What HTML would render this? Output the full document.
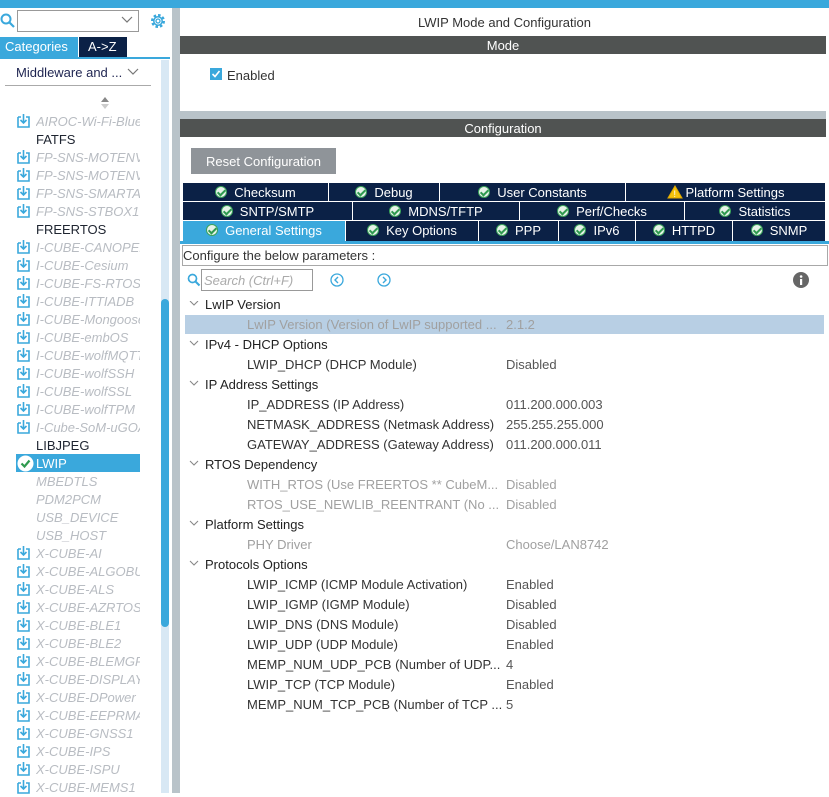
<!DOCTYPE html>
<html><head><meta charset="utf-8"><style>
*{margin:0;padding:0;box-sizing:border-box}
body{width:829px;height:793px;overflow:hidden;background:#fff;font-family:"Liberation Sans",Arial,sans-serif;font-size:13px;color:#333;position:relative}
.a{position:absolute;white-space:nowrap}
.li{position:absolute;left:36px;width:104px;overflow:hidden;white-space:nowrap;font-size:13px;line-height:18px;height:18px}
.g{color:#b8bcc2;font-style:italic}
.n{color:#1e2430}
.tab{position:absolute;background:#0b2146;color:#fff;font-size:13px;text-align:center;border-right:1px solid #fff;white-space:nowrap;overflow:hidden}
.ck{display:inline-block;width:12px;height:12px;border-radius:50%;background:#e6f2e8;border:1px solid #3aa35a;vertical-align:-1px;margin-right:7px;position:relative}
.ck:after{content:"";position:absolute;left:3px;top:1px;width:3px;height:6px;border:solid #2f9a4f;border-width:0 2px 2px 0;transform:rotate(45deg)}
.r{position:absolute;height:20px;line-height:20px;white-space:nowrap}
.grp{left:205px;color:#222}
.ch{left:189px;top:7px;width:10px;height:6px}
.k{left:247px;color:#333}
.v{left:506px;color:#555}
.dim{color:#a0a0a0}
</style></head><body>
<div class="a" style="left:0;top:0;width:829px;height:8px;background:#3aa8dc"></div>
<svg class="a" style="left:0;top:13px" width="16" height="16" viewBox="0 0 16 16"><circle cx="6" cy="6" r="4.5" fill="none" stroke="#3aa8dc" stroke-width="2"/><line x1="9.5" y1="9.5" x2="14" y2="14" stroke="#3aa8dc" stroke-width="2.2"/></svg>
<div class="a" style="left:17px;top:10px;width:122px;height:22px;border:1px solid #999;background:#fff"></div>
<svg class="a" style="left:121px;top:16px" width="12" height="8"><polyline points="1,1 6,6 11,1" fill="none" stroke="#777" stroke-width="1.2"/></svg>
<svg class="a" style="left:149px;top:12px" width="18" height="18" viewBox="0 0 18 18"><circle cx="9" cy="9" r="5.5" fill="none" stroke="#3aa8dc" stroke-width="3" stroke-dasharray="2.4 1.9"/><circle cx="9" cy="9" r="4.2" fill="none" stroke="#3aa8dc" stroke-width="1.5"/><circle cx="9" cy="9" r="2" fill="none" stroke="#3aa8dc" stroke-width="1.3"/></svg>
<div class="a" style="left:0;top:37px;width:78px;height:20px;background:#3aa8dc;color:#fff;line-height:20px;padding-left:5px">Categories</div>
<div class="a" style="left:79px;top:37px;width:48px;height:20px;background:#0b2146;color:#fff;line-height:20px;padding-left:9px">A-&gt;Z</div>
<div class="a" style="left:0;top:57px;width:170px;height:2px;background:#3aa8dc"></div>
<div class="a" style="left:16px;top:65px;color:#1e2450;font-size:13px">Middleware and ...</div>
<svg class="a" style="left:127px;top:68px" width="12" height="8"><polyline points="1,1 6,6 11,1" fill="none" stroke="#777" stroke-width="1.2"/></svg>
<div class="a" style="left:5px;top:85px;width:146px;height:1px;background:#aaa"></div>
<svg class="a" style="left:101px;top:97px" width="8" height="12"><polygon points="4,0 8,5 0,5" fill="#888"/><polygon points="0,7 8,7 4,12" fill="#ccc"/></svg>
<div class="a" style="left:161px;top:60px;width:8px;height:733px;background:#d8e8f4"></div>
<div class="a" style="left:161px;top:299px;width:8px;height:328px;background:#3aa8dc;border-radius:4px"></div>
<div class="a" style="left:172px;top:8px;width:8px;height:785px;background:#b9c3c9"></div>
<div class="a" style="left:16px;top:454px;width:124px;height:18px;background:#3aa8dc"></div>
<svg class="a" style="left:17px;top:455px" width="17" height="17"><circle cx="8.5" cy="8.5" r="8" fill="#fff"/><polyline points="4.5,8.5 7.5,11.5 12.5,5.5" fill="none" stroke="#2f9a4f" stroke-width="2.2"/></svg>
<div class="li" style="top:455px;color:#fff">LWIP</div>

<div class="li g" style="top:113px">AIROC-Wi-Fi-Bluetooth</div>
<div class="li n" style="top:131px">FATFS</div>
<div class="li g" style="top:149px">FP-SNS-MOTENV1</div>
<div class="li g" style="top:167px">FP-SNS-MOTENVWB1</div>
<div class="li g" style="top:185px">FP-SNS-SMARTAG</div>
<div class="li g" style="top:203px">FP-SNS-STBOX1</div>
<div class="li n" style="top:221px">FREERTOS</div>
<div class="li g" style="top:239px">I-CUBE-CANOPEN</div>
<div class="li g" style="top:257px">I-CUBE-Cesium</div>
<div class="li g" style="top:275px">I-CUBE-FS-RTOS</div>
<div class="li g" style="top:293px">I-CUBE-ITTIADB</div>
<div class="li g" style="top:311px">I-CUBE-Mongoose</div>
<div class="li g" style="top:329px">I-CUBE-embOS</div>
<div class="li g" style="top:347px">I-CUBE-wolfMQTT</div>
<div class="li g" style="top:365px">I-CUBE-wolfSSH</div>
<div class="li g" style="top:383px">I-CUBE-wolfSSL</div>
<div class="li g" style="top:401px">I-CUBE-wolfTPM</div>
<div class="li g" style="top:419px">I-Cube-SoM-uGOAL</div>
<div class="li n" style="top:437px">LIBJPEG</div>
<div class="li g" style="top:473px">MBEDTLS</div>
<div class="li g" style="top:491px">PDM2PCM</div>
<div class="li g" style="top:509px">USB_DEVICE</div>
<div class="li g" style="top:527px">USB_HOST</div>
<div class="li g" style="top:545px">X-CUBE-AI</div>
<div class="li g" style="top:563px">X-CUBE-ALGOBUILD</div>
<div class="li g" style="top:581px">X-CUBE-ALS</div>
<div class="li g" style="top:599px">X-CUBE-AZRTOS</div>
<div class="li g" style="top:617px">X-CUBE-BLE1</div>
<div class="li g" style="top:635px">X-CUBE-BLE2</div>
<div class="li g" style="top:653px">X-CUBE-BLEMGR</div>
<div class="li g" style="top:671px">X-CUBE-DISPLAY</div>
<div class="li g" style="top:689px">X-CUBE-DPower</div>
<div class="li g" style="top:707px">X-CUBE-EEPRMA1</div>
<div class="li g" style="top:725px">X-CUBE-GNSS1</div>
<div class="li g" style="top:743px">X-CUBE-IPS</div>
<div class="li g" style="top:761px">X-CUBE-ISPU</div>
<div class="li g" style="top:779px">X-CUBE-MEMS1</div>

<svg class="a" style="left:17px;top:114px" width="14" height="680">
<defs><g id="d"><path d="M1 3 V13 H12 V3 H9 M4 3 H1" fill="none" stroke="#3aa8dc" stroke-width="1.6"/><path d="M6.5 0 V9 M3.5 6 L6.5 9 L9.5 6" fill="none" stroke="#3aa8dc" stroke-width="1.6"/></g></defs>
<use href="#d" y="0"/><use href="#d" y="36"/><use href="#d" y="54"/><use href="#d" y="72"/><use href="#d" y="90"/>
<use href="#d" y="126"/><use href="#d" y="144"/><use href="#d" y="162"/><use href="#d" y="180"/><use href="#d" y="198"/><use href="#d" y="216"/><use href="#d" y="234"/><use href="#d" y="252"/><use href="#d" y="270"/><use href="#d" y="288"/><use href="#d" y="306"/>
<use href="#d" y="432"/><use href="#d" y="450"/><use href="#d" y="468"/><use href="#d" y="486"/><use href="#d" y="504"/><use href="#d" y="522"/><use href="#d" y="540"/><use href="#d" y="558"/><use href="#d" y="576"/><use href="#d" y="594"/><use href="#d" y="612"/><use href="#d" y="630"/><use href="#d" y="648"/><use href="#d" y="666"/>
</svg>

<div class="a" style="left:180px;top:15px;width:649px;text-align:center;color:#333;font-size:13px">LWIP Mode and Configuration</div>
<div class="a" style="left:180px;top:36px;width:646px;height:18px;background:#505352;color:#fff;text-align:center;line-height:19px">Mode</div>
<div class="a" style="left:210px;top:68px;width:12px;height:12px;background:#3aa8dc"></div>
<svg class="a" style="left:210px;top:68px" width="12" height="12"><polyline points="2.5,6 5,8.5 9.5,3" fill="none" stroke="#fff" stroke-width="1.6"/></svg>
<div class="a" style="left:227px;top:68px;color:#333">Enabled</div>
<div class="a" style="left:180px;top:111px;width:646px;height:8px;background:#b9c3c9"></div>
<div class="a" style="left:180px;top:119px;width:646px;height:18px;background:#505352;color:#fff;text-align:center;line-height:19px">Configuration</div>
<div class="a" style="left:191px;top:148px;width:145px;height:26px;background:#8f9499;color:#fff;text-align:center;line-height:27px">Reset Configuration</div>

<div class="tab" style="left:183px;top:183px;width:146px;height:18px;line-height:19px"><span class="ck"></span>Checksum</div>
<div class="tab" style="left:329px;top:183px;width:111px;height:18px;line-height:19px"><span class="ck"></span>Debug</div>
<div class="tab" style="left:440px;top:183px;width:186px;height:18px;line-height:19px"><span class="ck"></span>User Constants</div>
<div class="tab" style="left:626px;top:183px;width:199px;height:18px;line-height:19px;border-right:none"><svg width="16" height="14" style="vertical-align:-2px;margin-right:3px"><polygon points="8,1 15,13 1,13" fill="#f4c20d" stroke="#e0a800"/><text x="6.5" y="12" font-size="9" fill="#fff" font-family="Liberation Sans">!</text></svg>Platform Settings</div>
<div class="tab" style="left:183px;top:202px;width:170px;height:18px;line-height:19px"><span class="ck"></span>SNTP/SMTP</div>
<div class="tab" style="left:353px;top:202px;width:167px;height:18px;line-height:19px"><span class="ck"></span>MDNS/TFTP</div>
<div class="tab" style="left:520px;top:202px;width:165px;height:18px;line-height:19px"><span class="ck"></span>Perf/Checks</div>
<div class="tab" style="left:685px;top:202px;width:140px;height:18px;line-height:19px;border-right:none"><span class="ck"></span>Statistics</div>
<div class="tab" style="left:183px;top:221px;width:163px;height:20px;line-height:20px;background:#3aa8dc"><span class="ck"></span>General Settings</div>
<div class="tab" style="left:346px;top:221px;width:133px;height:20px;line-height:20px"><span class="ck"></span>Key Options</div>
<div class="tab" style="left:479px;top:221px;width:80px;height:20px;line-height:20px"><span class="ck"></span>PPP</div>
<div class="tab" style="left:559px;top:221px;width:77px;height:20px;line-height:20px"><span class="ck"></span>IPv6</div>
<div class="tab" style="left:636px;top:221px;width:97px;height:20px;line-height:20px"><span class="ck"></span>HTTPD</div>
<div class="tab" style="left:733px;top:221px;width:92px;height:20px;line-height:20px;border-right:none"><span class="ck"></span>SNMP</div>
<div class="a" style="left:180px;top:241px;width:649px;height:3px;background:#3aa8dc"></div>
<div class="a" style="left:182px;top:245px;width:646px;height:21px;border:1px solid #a8a8a8;line-height:20px;padding-left:0px;color:#333">Configure the below parameters :</div>
<svg class="a" style="left:187px;top:273px" width="14" height="14"><circle cx="5.5" cy="5.5" r="4" fill="none" stroke="#3aa8dc" stroke-width="1.7"/><line x1="8.5" y1="8.5" x2="12.5" y2="12.5" stroke="#3aa8dc" stroke-width="2"/></svg>
<div class="a" style="left:201px;top:269px;width:112px;height:22px;border:1px solid #999;color:#aaa;font-style:italic;line-height:21px;padding-left:2px">Search (Ctrl+F)</div>
<svg class="a" style="left:330px;top:273px" width="14" height="14"><circle cx="7" cy="7" r="6" fill="none" stroke="#3aa8dc" stroke-width="1.3"/><polyline points="8,4 5,7 8,10" fill="none" stroke="#3aa8dc" stroke-width="1.4"/></svg>
<svg class="a" style="left:377px;top:273px" width="14" height="14"><circle cx="7" cy="7" r="6" fill="none" stroke="#3aa8dc" stroke-width="1.3"/><polyline points="6,4 9,7 6,10" fill="none" stroke="#3aa8dc" stroke-width="1.4"/></svg>
<svg class="a" style="left:793px;top:272px" width="16" height="16"><circle cx="8" cy="8" r="8" fill="#666"/><rect x="7" y="7" width="2.2" height="6" fill="#fff"/><circle cx="8.1" cy="4.5" r="1.3" fill="#fff"/></svg>

<div class="a" style="left:185px;top:315px;width:639px;height:19px;background:#b8cfe4"></div>
<svg class="a" style="left:189px;top:301px" width="10" height="260">
<defs><polyline id="c" points="1,0 5,4 9,0" fill="none" stroke="#888" stroke-width="1.1"/></defs>
<use href="#c" y="0"/><use href="#c" y="40"/><use href="#c" y="80"/><use href="#c" y="160"/><use href="#c" y="220"/><use href="#c" y="260"/>
</svg>
<svg class="a" style="left:189px;top:561px" width="10" height="6"><polyline points="1,0 5,4 9,0" fill="none" stroke="#888" stroke-width="1.1"/></svg>
<div class="r grp" style="top:295px">LwIP Version</div>
<div class="r k dim" style="top:315px">LwIP Version (Version of LwIP supported ...</div><div class="r v dim" style="top:315px">2.1.2</div>
<div class="r grp" style="top:335px">IPv4 - DHCP Options</div>
<div class="r k" style="top:355px">LWIP_DHCP (DHCP Module)</div><div class="r v" style="top:355px">Disabled</div>
<div class="r grp" style="top:375px">IP Address Settings</div>
<div class="r k" style="top:395px">IP_ADDRESS (IP Address)</div><div class="r v" style="top:395px">011.200.000.003</div>
<div class="r k" style="top:415px">NETMASK_ADDRESS (Netmask Address)</div><div class="r v" style="top:415px">255.255.255.000</div>
<div class="r k" style="top:435px">GATEWAY_ADDRESS (Gateway Address)</div><div class="r v" style="top:435px">011.200.000.011</div>
<div class="r grp" style="top:455px">RTOS Dependency</div>
<div class="r k dim" style="top:475px">WITH_RTOS (Use FREERTOS ** CubeM...</div><div class="r v dim" style="top:475px">Disabled</div>
<div class="r k dim" style="top:495px">RTOS_USE_NEWLIB_REENTRANT (No ...</div><div class="r v dim" style="top:495px">Disabled</div>
<div class="r grp" style="top:515px">Platform Settings</div>
<div class="r k dim" style="top:535px">PHY Driver</div><div class="r v dim" style="top:535px">Choose/LAN8742</div>
<div class="r grp" style="top:555px">Protocols Options</div>
<div class="r k" style="top:575px">LWIP_ICMP (ICMP Module Activation)</div><div class="r v" style="top:575px">Enabled</div>
<div class="r k" style="top:595px">LWIP_IGMP (IGMP Module)</div><div class="r v" style="top:595px">Disabled</div>
<div class="r k" style="top:615px">LWIP_DNS (DNS Module)</div><div class="r v" style="top:615px">Disabled</div>
<div class="r k" style="top:635px">LWIP_UDP (UDP Module)</div><div class="r v" style="top:635px">Enabled</div>
<div class="r k" style="top:655px">MEMP_NUM_UDP_PCB (Number of UDP...</div><div class="r v" style="top:655px">4</div>
<div class="r k" style="top:675px">LWIP_TCP (TCP Module)</div><div class="r v" style="top:675px">Enabled</div>
<div class="r k" style="top:695px">MEMP_NUM_TCP_PCB (Number of TCP ...</div><div class="r v" style="top:695px">5</div>
</body></html>
